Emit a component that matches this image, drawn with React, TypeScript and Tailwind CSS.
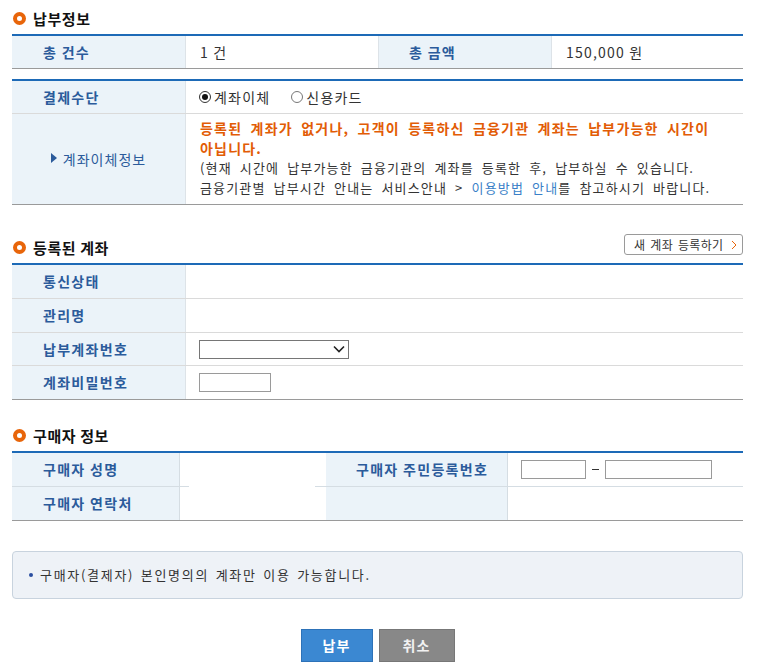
import React from "react";

const Th = ({ children, className = "" }: { children?: React.ReactNode; className?: string }) => (
  <div className={`bg-[#ebf3f9] text-[#2b5b9b] font-bold text-[14px] tracking-[1.3px] flex items-center ${className}`}>{children}</div>
);

const Title = ({ children }: { children: React.ReactNode }) => (
  <div className="flex items-center h-[16px]">
    <span className="ml-[1px] w-[13px] h-[13px] rounded-full border-[4px] border-[#e8650a] bg-white" />
    <span className="ml-[7px] text-[15px] font-bold text-[#111] leading-none tracking-[0.6px]">{children}</span>
  </div>
);

const Input = ({ w }: { w: string }) => (
  <div className={`${w} h-[19px] border border-[#9a9a9a] bg-white`} />
);

export default function App() {
  return (
    <div className="w-[773px] h-[671px] bg-white font-['Noto_Sans_CJK_KR','Noto_Sans',sans-serif] text-[13px] text-[#333]">
      <div className="ml-[12px] w-[731px]">
        {/* Section 1 */}
        <div className="h-[34px] flex items-end pb-[8px]">
          <Title>납부정보</Title>
        </div>
        <div className="grid grid-cols-[174px_192px_174px_1fr] h-[35px] border-t-2 border-t-[#1d6ab7] border-b border-b-[#9a9a9a]">
          <Th className="pl-[31px] border-r border-r-[#dde3e8]">총 건수</Th>
          <div className="flex items-center pl-[14px] text-[14px] tracking-[1.2px]">1 건</div>
          <Th className="pl-[30px] border-r border-r-[#dde3e8] border-l border-l-[#dde3e8]">총 금액</Th>
          <div className="flex items-center pl-[14px] text-[14px] tracking-[1.2px]">150,000 원</div>
        </div>

        <div className="mt-[10px] border-t-2 border-t-[#1d6ab7] border-b border-b-[#9a9a9a]">
          <div className="grid grid-cols-[174px_1fr] h-[33px] border-b border-b-[#dadada]">
            <Th className="pl-[31px] border-r border-r-[#dde3e8]">결제수단</Th>
            <div className="flex items-center pl-[13px] text-[14px] tracking-[1.2px]">
              <span className="w-[12px] h-[12px] rounded-full border border-[#333] flex items-center justify-center">
                <span className="w-[6px] h-[6px] rounded-full bg-[#111]" />
              </span>
              <span className="ml-[3px]">계좌이체</span>
              <span className="ml-[21px] w-[12px] h-[12px] rounded-full border border-[#777]" />
              <span className="ml-[3px]">신용카드</span>
            </div>
          </div>
          <div className="grid grid-cols-[174px_1fr] h-[90px]">
            <Th className="justify-center border-r border-r-[#dde3e8] font-normal text-[13px] tracking-[1px]">
              <svg width="6" height="10" viewBox="0 0 6 10" className="mr-[6px] mb-[2px]">
                <polygon points="0,0 6,5 0,10" fill="#2b5b9b" />
              </svg>
              계좌이체정보
            </Th>
            <div className="flex flex-col justify-center pl-[14px] leading-[19.5px] pb-[2px] tracking-[1.15px] whitespace-nowrap">
              <div className="text-[#e25c05] font-bold text-[14px] [word-spacing:4px] tracking-[1.2px]">
                등록된 계좌가 없거나, 고객이 등록하신 금융기관 계좌는 납부가능한 시간이
              </div>
              <div className="text-[#e25c05] font-bold text-[14px] tracking-[1.2px]">아닙니다.</div>
              <div className="[word-spacing:4px]">(현재 시간에 납부가능한 금융기관의 계좌를 등록한 후, 납부하실 수 있습니다.</div>
              <div className="[word-spacing:4px]">
                금융기관별 납부시간 안내는 서비스안내 &gt; <span className="text-[#3a7fc8]">이용방법 안내</span>를 참고하시기 바랍니다.
              </div>
            </div>
          </div>
        </div>

        {/* Section 2 */}
        <div className="h-[58px] flex items-end justify-between pb-[8px]">
          <Title>등록된 계좌</Title>
          <button className="h-[21px] w-[119px] border border-[#9a9a9a] rounded-[3px] bg-white flex items-center justify-between pl-[9px] pr-[5px] text-[12px] text-[#333] [word-spacing:2px] tracking-[0.3px]">
            <span>새 계좌 등록하기</span>
            <svg width="6" height="10" viewBox="0 0 6 10">
              <polyline points="1,1 5,5 1,9" fill="none" stroke="#e8650a" strokeWidth="1" />
            </svg>
          </button>
        </div>
        <div className="border-t-2 border-t-[#1d6ab7] border-b border-b-[#9a9a9a]">
          <div className="grid grid-cols-[174px_1fr] h-[34px] border-b border-b-[#dadada]">
            <Th className="pl-[31px] border-r border-r-[#dde3e8]">통신상태</Th>
            <div />
          </div>
          <div className="grid grid-cols-[174px_1fr] h-[34px] border-b border-b-[#dadada]">
            <Th className="pl-[31px] border-r border-r-[#dde3e8]">관리명</Th>
            <div />
          </div>
          <div className="grid grid-cols-[174px_1fr] h-[33px] border-b border-b-[#dadada]">
            <Th className="pl-[31px] border-r border-r-[#dde3e8]">납부계좌번호</Th>
            <div className="flex items-center pl-[13px]">
              <div className="w-[150px] h-[19px] border border-[#767676] bg-white flex items-center justify-end pr-[3px]">
                <svg width="12" height="8" viewBox="0 0 12 8">
                  <polyline points="1,1.5 6,6.5 11,1.5" fill="none" stroke="#222" strokeWidth="1.6" />
                </svg>
              </div>
            </div>
          </div>
          <div className="grid grid-cols-[174px_1fr] h-[33px]">
            <Th className="pl-[31px] border-r border-r-[#dde3e8]">계좌비밀번호</Th>
            <div className="flex items-center pl-[13px]">
              <Input w="w-[72px]" />
            </div>
          </div>
        </div>

        {/* Section 3 */}
        <div className="h-[51px] flex items-end pb-[8px]">
          <Title>구매자 정보</Title>
        </div>
        <div className="grid grid-cols-[168px_146px_182px_1fr] grid-rows-[33px_1px_33px] h-[70px] border-t-2 border-t-[#1d6ab7] border-b border-b-[#9a9a9a]">
          <Th className="pl-[31px] border-r border-r-[#d5dde3]">구매자 성명</Th>
          <div className="row-span-3 flex flex-col">
            <div className="h-[33px]" />
            <div className="h-[1px] flex justify-between">
              <div className="w-[9px] bg-[#d5dde3]" />
              <div className="w-[11px] bg-[#d5dde3]" />
            </div>
            <div className="flex-1" />
          </div>
          <Th className="pl-[30px] border-r border-r-[#d5dde3]">구매자 주민등록번호</Th>
          <div className="flex items-center pl-[13px]">
            <Input w="w-[65px]" />
            <span className="w-[7px] h-[1px] bg-[#333] ml-[6px] mr-[6px]" />
            <Input w="w-[107px]" />
          </div>
          <div className="bg-[#d5dde3]" />
          <div className="bg-[#d5dde3] col-start-3" />
          <div className="bg-[#d5dde3]" />
          <Th className="pl-[31px] border-r border-r-[#d5dde3] col-start-1">구매자 연락처</Th>
          <Th className="col-start-3 border-r border-r-[#d5dde3]" />
          <div />
        </div>

        {/* Info */}
        <div className="mt-[30px] h-[48px] rounded-[4px] border border-[#c8d3de] bg-[#eef2f7] flex items-center pl-[16px]">
          <span className="w-[4px] h-[4px] rounded-full bg-[#2a4ea0]" />
          <span className="ml-[7px] [word-spacing:2px] tracking-[1.7px]">구매자(결제자) 본인명의의 계좌만 이용 가능합니다.</span>
        </div>

        {/* Buttons */}
        <div className="mt-[30px] flex justify-center gap-[6px]">
          <button className="w-[72px] h-[33px] bg-[#3b88d2] border border-[#2d72b8] text-white font-bold text-[14px] tracking-[1px]">납부</button>
          <button className="w-[76px] h-[33px] bg-[#888888] border border-[#777777] text-[#f2f2f2] font-bold text-[14px] tracking-[1px]">취소</button>
        </div>
      </div>
    </div>
  );
}
